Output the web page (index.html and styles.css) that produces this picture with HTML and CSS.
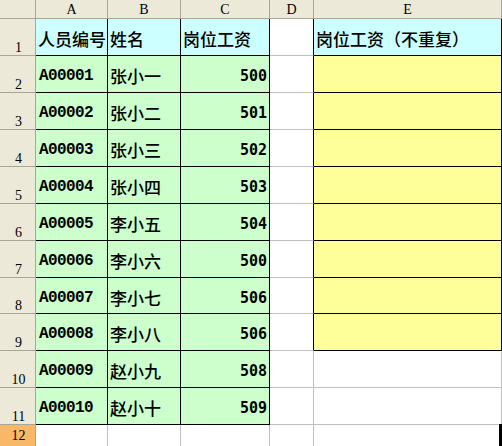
FILE: index.html
```html
<!DOCTYPE html>
<html lang="zh-CN">
<head>
<meta charset="utf-8">
<title>岗位工资</title>
<link rel="stylesheet" href="styles.css">
</head>
<body>
<div class="sheet">
  <div class="c hd"></div><div class="c hd col">A</div><div class="c hd col">B</div><div class="c hd col">C</div><div class="c hd col">D</div><div class="c hd col">E</div>

  <div class="c hd row">1</div><div class="c cy zh">人员编号</div><div class="c cy zh">姓名</div><div class="c cy zh">岗位工资</div><div class="c wt bkr"></div><div class="c cy zh">岗位工资（不重复）</div>

  <div class="c hd row">2</div><div class="c gr id">A00001</div><div class="c gr nm">张小一</div><div class="c gr num">500</div><div class="c wt bkr"></div><div class="c ye"></div>
  <div class="c hd row">3</div><div class="c gr id">A00002</div><div class="c gr nm">张小二</div><div class="c gr num">501</div><div class="c wt bkr"></div><div class="c ye"></div>
  <div class="c hd row">4</div><div class="c gr id">A00003</div><div class="c gr nm">张小三</div><div class="c gr num">502</div><div class="c wt bkr"></div><div class="c ye"></div>
  <div class="c hd row">5</div><div class="c gr id">A00004</div><div class="c gr nm">张小四</div><div class="c gr num">503</div><div class="c wt bkr"></div><div class="c ye"></div>
  <div class="c hd row">6</div><div class="c gr id">A00005</div><div class="c gr nm">李小五</div><div class="c gr num">504</div><div class="c wt bkr"></div><div class="c ye"></div>
  <div class="c hd row">7</div><div class="c gr id">A00006</div><div class="c gr nm">李小六</div><div class="c gr num">500</div><div class="c wt bkr"></div><div class="c ye"></div>
  <div class="c hd row">8</div><div class="c gr id">A00007</div><div class="c gr nm">李小七</div><div class="c gr num">506</div><div class="c wt bkr"></div><div class="c ye"></div>
  <div class="c hd row">9</div><div class="c gr id">A00008</div><div class="c gr nm">李小八</div><div class="c gr num">506</div><div class="c wt bkr"></div><div class="c ye"></div>
  <div class="c hd row">10</div><div class="c gr id">A00009</div><div class="c gr nm">赵小九</div><div class="c gr num">508</div><div class="c wt"></div><div class="c wt"></div>
  <div class="c hd row">11</div><div class="c gr id">A00010</div><div class="c gr nm">赵小十</div><div class="c gr num">509</div><div class="c wt"></div><div class="c wt"></div>
  <div class="c hd row sel">12</div><div class="c wt"></div><div class="c wt"></div><div class="c wt"></div><div class="c wt"></div><div class="c wt"></div>

  <div class="cursor"></div>
</div>
</body>
</html>
```

FILE: styles.css
```css
html, body {
  margin: 0;
  padding: 0;
  background: #ffffff;
}

.sheet {
  position: relative;
  display: grid;
  grid-template-columns: 36px 72px 73px 89px 44px 188px;
  grid-template-rows: 19px 37px 37px 37px 37px 37px 37px 37px 36px 37px 37px 37px 22px;
  width: 502px;
  height: 446px;
  overflow: hidden;
}

.c {
  box-sizing: border-box;
  border-right: 1px solid #c0c0c0;
  border-bottom: 1px solid #c0c0c0;
  display: flex;
  align-items: center;
  overflow: hidden;
  white-space: nowrap;
  color: #000000;
}

.hd {
  background: #ece9d8;
  border-right-color: #a9a697;
  border-bottom-color: #a9a697;
  font-family: "Liberation Serif", "DejaVu Serif", serif;
  font-size: 14px;
  justify-content: center;
}

.col {
  padding-top: 1px;
}

.row {
  align-items: flex-end;
  padding-bottom: 0px;
  padding-left: 2px;
  line-height: 14px;
}

.sel {
  background: #f8b868;
  align-items: center;
}

.cy, .gr, .ye {
  border-right-color: #000000;
  border-bottom-color: #000000;
}

.cy { background: #ccffff; }
.gr { background: #ccffcc; }
.ye { background: #ffff99; }
.wt { background: #ffffff; }

.bkr { border-right-color: #000000; }

.zh, .nm {
  font-family: "Noto Sans CJK SC", "Noto Sans", sans-serif;
  font-weight: 500;
  font-size: 17px;
  padding-left: 2px;
  padding-top: 2px;
}

.nm {
  padding-top: 3px;
}

.id {
  font-family: "Liberation Mono", "DejaVu Sans Mono", monospace;
  font-weight: 700;
  font-size: 16px;
  letter-spacing: -0.6px;
  padding-left: 3px;
  padding-top: 4px;
}

.num {
  font-family: "DejaVu Sans Mono", "Liberation Mono", monospace;
  font-weight: 700;
  font-size: 15px;
  justify-content: flex-end;
  padding-right: 2px;
  padding-top: 4px;
}

.cursor {
  position: absolute;
  left: 499px;
  top: 424px;
  width: 3px;
  height: 22px;
  background: #000000;
}
```
